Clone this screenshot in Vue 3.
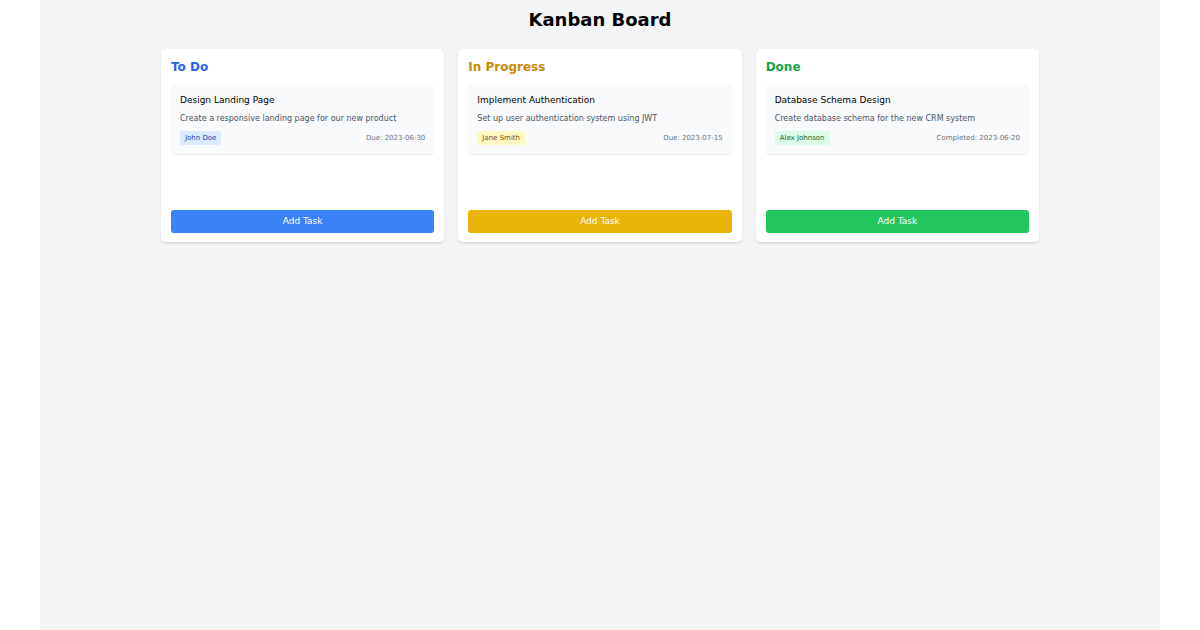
<script setup>
const columns = [
  {
    id: 'todo',
    title: 'To Do',
    tasks: [
      {
        title: 'Design Landing Page',
        text: 'Create a responsive landing page for our new product',
        assignee: 'John Doe',
        date: 'Due: 2023-06-30',
      },
    ],
  },
  {
    id: 'progress',
    title: 'In Progress',
    tasks: [
      {
        title: 'Implement Authentication',
        text: 'Set up user authentication system using JWT',
        assignee: 'Jane Smith',
        date: 'Due: 2023-07-15',
      },
    ],
  },
  {
    id: 'done',
    title: 'Done',
    tasks: [
      {
        title: 'Database Schema Design',
        text: 'Create database schema for the new CRM system',
        assignee: 'Alex Johnson',
        date: 'Completed: 2023-06-20',
      },
    ],
  },
]
</script>

<template>
  <main class="page">
    <div class="board">
      <h1>Kanban Board</h1>
      <div class="columns">
        <section v-for="col in columns" :key="col.id" class="column" :class="col.id">
          <h2>{{ col.title }}</h2>
          <div class="tasks">
            <article v-for="task in col.tasks" :key="task.title" class="task">
              <h3>{{ task.title }}</h3>
              <p>{{ task.text }}</p>
              <div class="meta">
                <span class="assignee">{{ task.assignee }}</span>
                <span class="date">{{ task.date }}</span>
              </div>
            </article>
          </div>
          <button type="button" class="add">Add Task</button>
        </section>
      </div>
    </div>
  </main>
</template>

<style>
body {
  margin: 0;
  background: #fff;
}
</style>

<style scoped>
.page {
  box-sizing: border-box;
  min-height: 100vh;
  margin: 0 40px;
  padding: 9px;
  background: #f3f4f6;
  color: #000;
  font-family: "DejaVu Sans", sans-serif;
}
.board {
  max-width: 878px;
  margin: 0 auto;
}
h1,
h2,
h3,
p {
  margin: 0;
}
h1 {
  margin-bottom: 18px;
  font-size: 18px;
  line-height: 22px;
  font-weight: 700;
  text-align: center;
}
.columns {
  display: grid;
  grid-template-columns: repeat(3, minmax(0, 1fr));
  gap: 14px;
}
.column {
  padding: 9px 10px;
  border-radius: 5px;
  background: #fff;
  box-shadow: 0 2px 4px -1px rgba(0, 0, 0, 0.12), 0 1px 2px -1px rgba(0, 0, 0, 0.1);
}
h2 {
  margin-bottom: 8px;
  font-size: 12px;
  line-height: 18px;
  font-weight: 700;
}
.tasks {
  min-height: 117px;
  margin-bottom: 9px;
}
.task {
  padding: 9px;
  border-radius: 5px;
  background: #f9fafb;
  box-shadow: 0 1px 1px rgba(0, 0, 0, 0.1);
}
h3 {
  margin-bottom: 5px;
  font-size: 9px;
  line-height: 14px;
  font-weight: 400;
}
p {
  margin-bottom: 5px;
  color: #4b5563;
  font-size: 8px;
  line-height: 14px;
}
.meta {
  display: flex;
  align-items: center;
  justify-content: space-between;
  font-size: 7px;
  line-height: 10px;
}
.assignee {
  padding: 2px 5px;
  border-radius: 2px;
}
.date {
  color: #6b7280;
}
.add {
  display: block;
  width: 100%;
  padding: 5px 9px;
  border: 0;
  border-radius: 3px;
  color: #fff;
  font-family: inherit;
  font-size: 9px;
  line-height: 13px;
  cursor: pointer;
}
.todo h2 {
  color: #2563eb;
}
.todo .assignee {
  background: #dbeafe;
  color: #1e40af;
}
.todo .add {
  background: #3b82f6;
}
.progress h2 {
  color: #ca8a04;
}
.progress .assignee {
  background: #fef9c3;
  color: #854d0e;
}
.progress .add {
  background: #eab308;
}
.done h2 {
  color: #16a34a;
}
.done .assignee {
  background: #dcfce7;
  color: #166534;
}
.done .add {
  background: #22c55e;
}
</style>
